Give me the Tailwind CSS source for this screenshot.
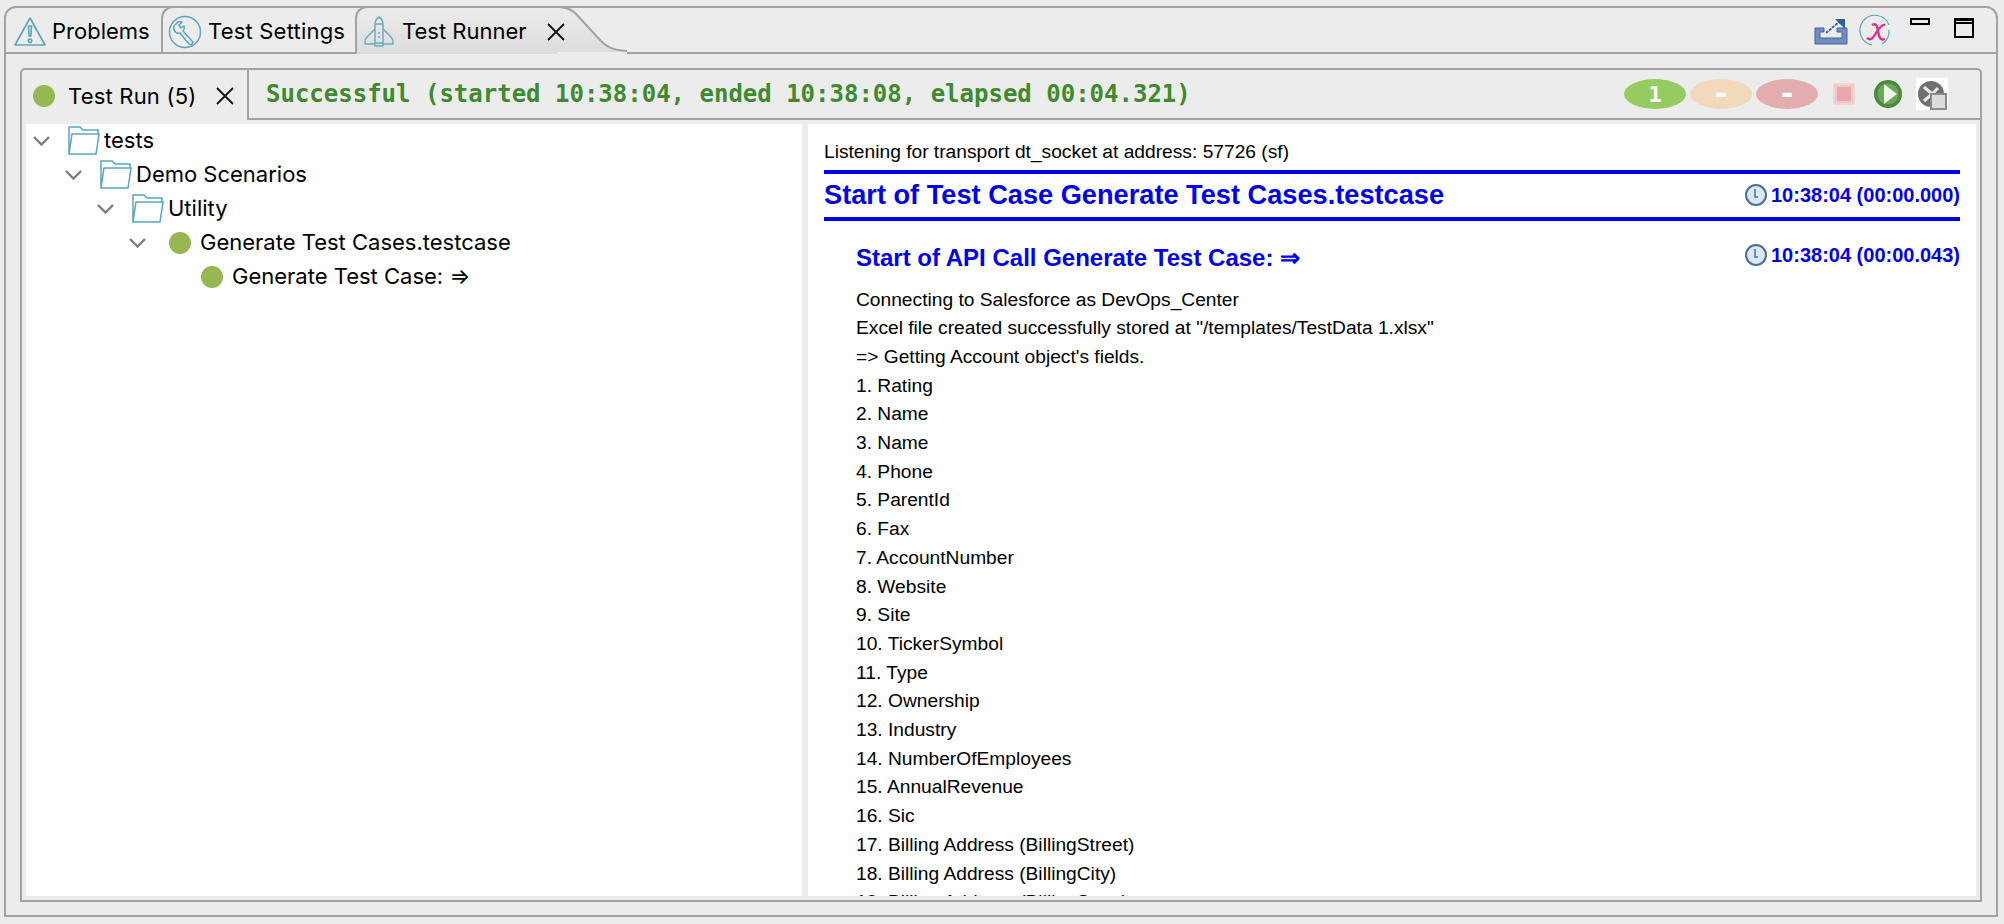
<!DOCTYPE html>
<html lang="en">

<head>
    <meta charset="UTF-8">
    <title>Test Runner</title>
    <script src="https://cdn.jsdelivr.net/npm/@tailwindcss/browser@4"></script>
</head>

<body class="h-[924px] overflow-hidden bg-[#ececec] font-[Inter,sans-serif] text-black">

    <!-- Outer view frame -->
    <div class="ml-[4px] mt-[6px] w-[1994px] h-[911px] border-2 border-[#a3a3a3] rounded-t-[12px] flex flex-col">

        <!-- View tabs -->
        <div class="h-[46px] flex shrink-0 text-[22px] tracking-[0.2px] whitespace-nowrap">
            <div class="w-[155px] border-b-2 border-[#a3a3a3] flex items-center pl-[7px] gap-[5px] pt-[3px]">
                <svg class="w-[34px] h-[32px]" viewBox="0 0 34 32" fill="none" stroke="#5ba5c0" stroke-width="1.6">
                    <path d="M17 2 L32 29 H2 Z" stroke-linejoin="round" />
                    <path d="M15.5 10 h3 l-.6 10 h-1.8 Z M17 23 a1.8 1.8 0 1 0 .01 0" />
                </svg>
                <span class="tracking-normal">Problems</span>
            </div>
            <div class="w-[194px] -mt-[2px] border-b-2 border-l-2 border-t-2 rounded-tl-[12px] border-[#a3a3a3] flex items-center pl-[5px] gap-[6px] pt-[3px]">
                <svg class="w-[34px] h-[34px]" viewBox="0 0 34 34" fill="none" stroke="#5ba5c0" stroke-width="1.5">
                    <circle cx="17" cy="17" r="15.5" />
                    <path d="M8 9 a5 5 0 0 1 6 -2 l-3 3 2 3 3-2 a5 5 0 0 1-1 5 l9 10 a2 2 0 0 1-3 3 l-9-11 a5 5 0 0 1-4-9 Z" stroke-linejoin="round" />
                </svg>
                <span>Test Settings</span>
            </div>
            <div class="w-[202px] -mt-[2px] border-l-2 border-t-2 rounded-tl-[12px] border-[#a3a3a3] bg-linear-to-b from-[#ececec] to-[#dcdcdc] flex items-center pl-[6px] gap-[7px] pt-[1px]">
                <svg class="w-[32px] h-[32px] shrink-0" viewBox="0 0 32 32" fill="none" stroke="#68adc6" stroke-width="1.5" stroke-linejoin="round">
                    <path d="M16 1 c2.5 1.5 4 4.500 4 8 v18 h-8 v-18 c0-3.500 1.500-6.500 4-8 Z" />
                    <path d="M12 8 h8 M12 27 v3 h8 v-3" />
                    <path d="M12 13 L4 21 c-1 1-2 3-2 5 v2 h10 M20 13 l8 8 c1 1 2 3 2 5 v2 h-10" />
                    <path d="M15 17 h2 M15 21 h2" />
                </svg>
                <span class="tracking-normal">Test Runner</span>
                <svg class="w-[18px] h-[18px] ml-[13px] shrink-0 relative z-10" viewBox="0 0 18 18" stroke="#111" stroke-width="1.8">
                    <path d="M1 1 L17 17 M17 1 L1 17" />
                </svg>
            </div>
            <svg class="w-[70px] h-[46px] shrink-0 -mt-[2px]" viewBox="0 0 70 46" fill="none" stroke="#a3a3a3" stroke-width="2">
                <defs>
                    <linearGradient id="activeTab" x1="0" y1="0" x2="0" y2="1">
                        <stop offset="0" stop-color="#ececec" />
                        <stop offset="1" stop-color="#dcdcdc" />
                    </linearGradient>
                </defs>
                <path d="M0 1 H3 C12 2 15 4 20 9 L44 35 C50 41 55 44 68 45 V48 H0 Z" fill="url(#activeTab)" stroke="none" />
                <path d="M0 1 H3 C12 2 15 4 20 9 L44 35 C50 41 55 44 70 45" />
            </svg>
            <div class="flex-1 border-b-2 border-[#a3a3a3] flex items-start">
                <svg class="w-[34px] h-[28px] ml-[1187px] mt-[9px]" viewBox="0 0 34 28">
                    <path d="M1 11 h9 v4 h-4 v6 h22 v-6 h-5 v-4 h10 v16 h-32 Z" fill="#6f8dbd" stroke="#44659c" />
                    <path d="M12 16 L25 5" stroke="#44659c" stroke-width="2" stroke-dasharray="3 1" />
                    <path d="M21 2 h10 v10 Z" fill="#2f5f9f" />
                </svg>
                <svg class="w-[34px] h-[34px] ml-[10px] mt-[5px]" viewBox="0 0 34 34" fill="none">
                    <path d="M14 32 A15 15 0 1 1 31 12" stroke="#5ba5c0" stroke-width="1.2" />
                    <path d="M31 17 A15 15 0 0 1 24 31" stroke="#5ba5c0" stroke-width="1.2" />
                    <path d="M14 12 c4-2 5 0 6 6 c1 6 2 10 7 8 M27 12 c-3-1-6 3-9 8 c-3 5-5 8-9 5" stroke="#e0308f" stroke-width="2.4" />
                </svg>
                <div class="w-[20px] h-[7px] border-2 border-black ml-[18px] mt-[10px]"></div>
                <div class="w-[20px] h-[20px] border-2 border-t-[3px] border-black ml-[24px] mt-[10px] flex flex-col">
                    <div class="h-[3px] border-b-2 border-black"></div>
                </div>
            </div>
        </div>

        <!-- Test run panel -->
        <div class="mx-[14px] mt-[14px] h-[834px] border-2 border-[#a3a3a3] rounded-t-[5px] flex flex-col">

            <div class="h-[50px] flex shrink-0">
                <div class="w-[227px] border-r-2 border-[#a3a3a3] flex items-center pl-[11px] text-[22px] tracking-[0.2px] pt-[2px]">
                    <span class="w-[22px] h-[22px] rounded-full bg-[#97b752] shrink-0"></span>
                    <span class="ml-[13px]">Test Run (5)</span>
                    <svg class="w-[18px] h-[18px] ml-[20px]" viewBox="0 0 18 18" stroke="#111" stroke-width="1.8">
                        <path d="M1 1 L17 17 M17 1 L1 17" />
                    </svg>
                </div>
                <div class="flex-1 border-b-2 border-[#a3a3a3] flex items-center pl-[17px]">
                    <span class="font-['DejaVu_Sans_Mono',monospace] font-bold text-[24px] text-[#3f8a2e]">Successful (started 10:38:04, ended 10:38:08, elapsed 00:04.321)</span>
                    <div class="ml-auto flex items-center font-['DejaVu_Sans_Mono',monospace] font-bold text-[22px] text-white">
                        <span class="w-[62px] h-[30px] rounded-[50%] bg-[#96cb62] flex items-center justify-center">1</span>
                        <span class="w-[62px] h-[30px] rounded-[50%] bg-[#f2d9bc] ml-[4px] flex items-center justify-center text-[30px] leading-none">-</span>
                        <span class="w-[62px] h-[30px] rounded-[50%] bg-[#e3adb0] ml-[4px] flex items-center justify-center text-[30px] leading-none">-</span>
                        <div class="w-[22px] h-[22px] ml-[15px] bg-[#efc9c9] border-2 border-[#f1d4d4] p-[2px]">
                            <div class="w-full h-full bg-[#e6a9ab]"></div>
                        </div>
                        <svg class="w-[30px] h-[30px] ml-[18px]" viewBox="0 0 30 30">
                            <circle cx="15" cy="15" r="14" fill="#4b8a3c" />
                            <circle cx="15" cy="15" r="10.5" fill="#6ba75a" />
                            <path d="M11 5 L24 15 L11 25 Z" fill="#eef5e6" />
                        </svg>
                        <svg class="w-[32px] h-[32px] ml-[13px] mr-[32px]" viewBox="0 0 32 32">
                            <rect width="32" height="32" fill="#fff" />
                            <circle cx="15" cy="16" r="13" fill="#6f6f6f" />
                            <path d="M8 9 L16 16 M8 23 L16 16 M16 16 L22 10" stroke="#e8e8e8" stroke-width="3" />
                            <rect x="15" y="16" width="15" height="15" fill="#dcdcdc" stroke="#8a8a8a" stroke-width="2" />
                        </svg>
                    </div>
                </div>
            </div>

            <div class="flex-1 min-h-0 flex p-[4px]">

                <!-- Tree -->
                <div class="w-[776px] bg-white text-[22px] leading-[34px]">
                    <div class="h-[34px] flex items-center">
                        <svg class="w-[17px] h-[10px] ml-[7px]" viewBox="0 0 17 10" fill="none" stroke="#7d7d7d" stroke-width="2.4"><path d="M1 1 L8.5 8.5 L16 1" /></svg>
                        <svg class="w-[32px] h-[30px] ml-[18px]" viewBox="0 0 32 30" fill="none" stroke="#5ba5c0" stroke-width="1.5"><path d="M1 28 V1 H12 L15 4 H30 V8 M4 8 H31 L28 28 H1 Z" /></svg>
                        <span class="ml-[4px] mb-[2px]">tests</span>
                    </div>
                    <div class="h-[34px] flex items-center">
                        <svg class="w-[17px] h-[10px] ml-[39px]" viewBox="0 0 17 10" fill="none" stroke="#7d7d7d" stroke-width="2.4"><path d="M1 1 L8.5 8.5 L16 1" /></svg>
                        <svg class="w-[32px] h-[30px] ml-[18px]" viewBox="0 0 32 30" fill="none" stroke="#5ba5c0" stroke-width="1.5"><path d="M1 28 V1 H12 L15 4 H30 V8 M4 8 H31 L28 28 H1 Z" /></svg>
                        <span class="ml-[4px] mb-[2px]">Demo Scenarios</span>
                    </div>
                    <div class="h-[34px] flex items-center">
                        <svg class="w-[17px] h-[10px] ml-[71px]" viewBox="0 0 17 10" fill="none" stroke="#7d7d7d" stroke-width="2.4"><path d="M1 1 L8.5 8.5 L16 1" /></svg>
                        <svg class="w-[32px] h-[30px] ml-[18px]" viewBox="0 0 32 30" fill="none" stroke="#5ba5c0" stroke-width="1.5"><path d="M1 28 V1 H12 L15 4 H30 V8 M4 8 H31 L28 28 H1 Z" /></svg>
                        <span class="ml-[4px] mb-[2px]">Utility</span>
                    </div>
                    <div class="h-[34px] flex items-center">
                        <svg class="w-[17px] h-[10px] ml-[103px]" viewBox="0 0 17 10" fill="none" stroke="#7d7d7d" stroke-width="2.4"><path d="M1 1 L8.5 8.5 L16 1" /></svg>
                        <span class="w-[22px] h-[22px] rounded-full bg-[#97b752] ml-[23px]"></span>
                        <span class="ml-[9px] mb-[2px]">Generate Test Cases.testcase</span>
                    </div>
                    <div class="h-[34px] flex items-center">
                        <span class="w-[22px] h-[22px] rounded-full bg-[#97b752] ml-[175px]"></span>
                        <span class="ml-[9px] mb-[2px]">Generate Test Case: ⇒</span>
                    </div>
                </div>

                <div class="w-[6px] shrink-0"></div>

                <!-- Console output -->
                <div class="flex-1 bg-white overflow-hidden pl-[16px] pr-[16px] font-['Liberation_Sans',Arial,sans-serif] text-[19.2px] leading-[28.7px]">
                    <div class="pt-[14px] h-[46px]">Listening for transport dt_socket at address: 57726 (sf)</div>
                    <div class="h-[51px] border-y-4 border-[#0000ee] flex items-center justify-between text-[#0000ee] font-bold">
                        <span class="text-[27.2px]">Start of Test Case Generate Test Cases.testcase</span>
                        <span class="flex items-center gap-[4px] text-[20px]">
                            <svg class="w-[22px] h-[22px]" viewBox="0 0 22 22"><circle cx="11" cy="11" r="10" fill="#dbe7f2" stroke="#47709c" stroke-width="2" /><path d="M10 5 V13 H13" fill="none" stroke="#47709c" stroke-width="1.5" /></svg>
                            10:38:04 (00:00.000)
                        </span>
                    </div>
                    <div class="pl-[32px] pt-[16px] flex justify-between text-[#0000ee] font-bold">
                        <span class="text-[24px] leading-[42px]">Start of API Call Generate Test Case: ⇒</span>
                        <span class="flex items-start gap-[4px] text-[20px] pt-[4px]">
                            <svg class="w-[22px] h-[22px] mt-[3px]" viewBox="0 0 22 22"><circle cx="11" cy="11" r="10" fill="#dbe7f2" stroke="#47709c" stroke-width="2" /><path d="M10 5 V13 H13" fill="none" stroke="#47709c" stroke-width="1.5" /></svg>
                            10:38:04 (00:00.043)
                        </span>
                    </div>
                    <div class="pl-[32px] pt-[6.5px]">
                        <p>Connecting to Salesforce as DevOps_Center</p>
                        <p>Excel file created successfully stored at "/templates/TestData 1.xlsx"</p>
                        <p>=&gt; Getting Account object's fields.</p>
                        <p>1. Rating</p>
                        <p>2. Name</p>
                        <p>3. Name</p>
                        <p>4. Phone</p>
                        <p>5. ParentId</p>
                        <p>6. Fax</p>
                        <p>7. AccountNumber</p>
                        <p>8. Website</p>
                        <p>9. Site</p>
                        <p>10. TickerSymbol</p>
                        <p>11. Type</p>
                        <p>12. Ownership</p>
                        <p>13. Industry</p>
                        <p>14. NumberOfEmployees</p>
                        <p>15. AnnualRevenue</p>
                        <p>16. Sic</p>
                        <p>17. Billing Address (BillingStreet)</p>
                        <p>18. Billing Address (BillingCity)</p>
                        <p>19. Billing Address (BillingState)</p>
                    </div>
                </div>
            </div>
        </div>
    </div>

</body>

</html>
